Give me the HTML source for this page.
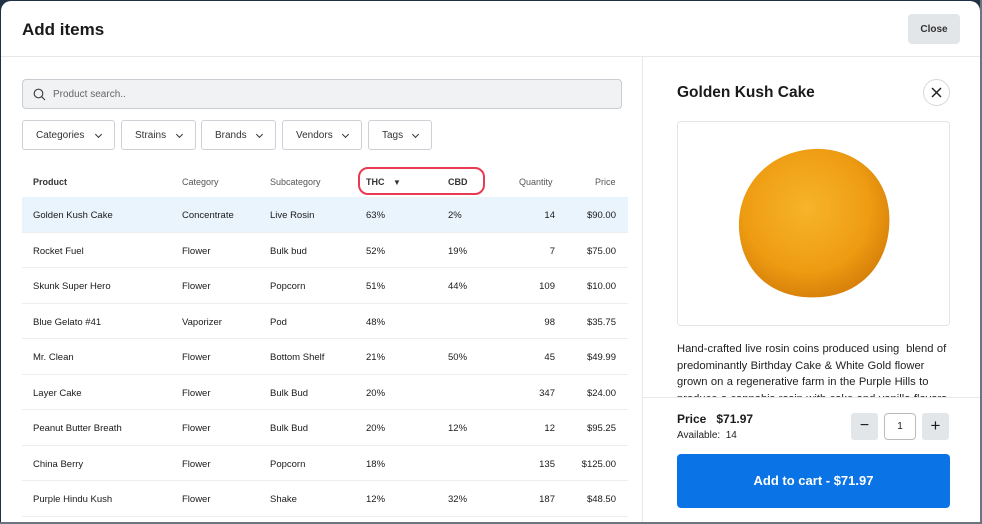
<!DOCTYPE html>
<html><head><style>
*{box-sizing:border-box;margin:0;padding:0}
body{width:982px;height:524px;background:#1f3142;font-family:"Liberation Sans",sans-serif;color:#1a1a1a;overflow:hidden;position:relative}
.modal{position:absolute;left:1px;top:1px;width:979px;height:523px;background:#fff;border-radius:10px 10px 0 0;overflow:hidden}
.hdr{position:absolute;left:0;top:0;width:100%;height:56px;border-bottom:1px solid #e6e8ea}
.hdr h1{position:absolute;left:21px;top:19px;font-size:17px;font-weight:bold}
.close{position:absolute;left:907px;top:13px;width:52px;height:30px;background:#e3e6e9;border-radius:4px;font-size:10px;font-weight:bold;color:#333;display:flex;align-items:center;justify-content:center}
.div{position:absolute;left:641px;top:56px;width:1px;height:470px;background:#e6e8ea}
.search{position:absolute;left:21px;top:78px;width:600px;height:30px;background:#f1f2f4;border:1px solid #c9cdd2;border-radius:4px}
.search span{position:absolute;left:30px;top:9px;font-size:10px;color:#666}
.f{position:absolute;top:119px;height:30px;border:1px solid #cdd1d5;border-radius:3px;font-size:10px;color:#333;display:flex;align-items:center;padding-left:13px}
.f:after{content:"";position:absolute;right:13px;top:11px;width:4px;height:4px;border-right:1.3px solid #333;border-bottom:1.3px solid #333;transform:rotate(45deg)}
.th{position:absolute;top:176px;font-size:9px;color:#555}
.row{position:absolute;left:21px;width:606px;height:35.5px;border-bottom:1px solid #eceef0;font-size:9.5px}
.row.sel{background:#eaf4fd}
.row span{position:absolute;top:13px}
</style></head><body>
<div class="modal">
<div class="hdr"><h1>Add items</h1><div class="close">Close</div></div>
<div class="div"></div>
<div class="search"><svg style="position:absolute;left:10px;top:8px" width="13" height="13" viewBox="0 0 13 13"><circle cx="5.5" cy="5.5" r="4.3" fill="none" stroke="#444" stroke-width="1.2"/><line x1="8.7" y1="8.7" x2="12" y2="12" stroke="#444" stroke-width="1.2"/></svg><span>Product search..</span></div>
<div class="f" style="left:21px;width:93px">Categories</div>
<div class="f" style="left:120px;width:75px">Strains</div>
<div class="f" style="left:200px;width:75px">Brands</div>
<div class="f" style="left:281px;width:80px">Vendors</div>
<div class="f" style="left:367px;width:64px">Tags</div>
<div class="th" style="left:32px;font-weight:bold;color:#333">Product</div>
<div class="th" style="left:181px">Category</div>
<div class="th" style="left:269px">Subcategory</div>
<div class="th" style="left:365px;font-weight:bold;color:#333">THC <span style="font-size:8px;margin-left:6px">▼</span></div>
<div class="th" style="left:447px;font-weight:bold;color:#333">CBD</div>
<div class="th" style="left:518px">Quantity</div>
<div class="th" style="left:594px">Price</div>
<div style="position:absolute;left:357px;top:166px;width:127px;height:28px;border:2.5px solid #e83a52;border-radius:10px"></div>
<div class="row sel" style="top:196px"><span style="left:11px">Golden Kush Cake</span><span style="left:160px">Concentrate</span><span style="left:248px">Live Rosin</span><span style="left:344px">63%</span><span style="left:426px">2%</span><span style="right:73px">14</span><span style="right:12px">$90.00</span></div>
<div class="row" style="top:231.5px"><span style="left:11px">Rocket Fuel</span><span style="left:160px">Flower</span><span style="left:248px">Bulk bud</span><span style="left:344px">52%</span><span style="left:426px">19%</span><span style="right:73px">7</span><span style="right:12px">$75.00</span></div>
<div class="row" style="top:267px"><span style="left:11px">Skunk Super Hero</span><span style="left:160px">Flower</span><span style="left:248px">Popcorn</span><span style="left:344px">51%</span><span style="left:426px">44%</span><span style="right:73px">109</span><span style="right:12px">$10.00</span></div>
<div class="row" style="top:302.5px"><span style="left:11px">Blue Gelato #41</span><span style="left:160px">Vaporizer</span><span style="left:248px">Pod</span><span style="left:344px">48%</span><span style="right:73px">98</span><span style="right:12px">$35.75</span></div>
<div class="row" style="top:338px"><span style="left:11px">Mr. Clean</span><span style="left:160px">Flower</span><span style="left:248px">Bottom Shelf</span><span style="left:344px">21%</span><span style="left:426px">50%</span><span style="right:73px">45</span><span style="right:12px">$49.99</span></div>
<div class="row" style="top:373.5px"><span style="left:11px">Layer Cake</span><span style="left:160px">Flower</span><span style="left:248px">Bulk Bud</span><span style="left:344px">20%</span><span style="right:73px">347</span><span style="right:12px">$24.00</span></div>
<div class="row" style="top:409px"><span style="left:11px">Peanut Butter Breath</span><span style="left:160px">Flower</span><span style="left:248px">Bulk Bud</span><span style="left:344px">20%</span><span style="left:426px">12%</span><span style="right:73px">12</span><span style="right:12px">$95.25</span></div>
<div class="row" style="top:444.5px"><span style="left:11px">China Berry</span><span style="left:160px">Flower</span><span style="left:248px">Popcorn</span><span style="left:344px">18%</span><span style="right:73px">135</span><span style="right:12px">$125.00</span></div>
<div class="row" style="top:480px"><span style="left:11px">Purple Hindu Kush</span><span style="left:160px">Flower</span><span style="left:248px">Shake</span><span style="left:344px">12%</span><span style="left:426px">32%</span><span style="right:73px">187</span><span style="right:12px">$48.50</span></div>

<div style="position:absolute;left:676px;top:83px;font-size:15.5px;font-weight:bold">Golden Kush Cake</div>
<div style="position:absolute;left:922px;top:78px;width:27px;height:27px;border:1px solid #d5d8db;border-radius:50%"><svg width="25" height="25" viewBox="0 0 25 25" style="position:absolute;left:0;top:0"><path d="M8 8L17 17M17 8L8 17" stroke="#222" stroke-width="1.5"/></svg></div>
<div style="position:absolute;left:676px;top:120px;width:273px;height:205px;border:1px solid #e3e5e8;border-radius:4px">
<svg width="273" height="205" viewBox="0 0 273 205" style="position:absolute;left:-1px;top:-1px"><defs><radialGradient id="g" cx="0.45" cy="0.4" r="0.6"><stop offset="0" stop-color="#f7b42a"/><stop offset="0.7" stop-color="#ee9c12"/><stop offset="1" stop-color="#d9820a"/></radialGradient></defs><path d="M137 28C170 26 208 48 212 90C216 135 190 172 145 176C100 180 65 155 62 108C60 62 95 30 137 28Z" fill="url(#g)"/></svg></div>
<div style="position:absolute;left:676px;top:340px;width:275px;font-size:11.2px;line-height:16.5px;color:#222;word-spacing:0.3px">Hand-crafted live rosin coins produced using &nbsp;blend of predominantly Birthday Cake &amp; White Gold flower grown on a regenerative farm in the Purple Hills to produce a cannabis rosin with cake and vanilla flavors</div>
<div style="position:absolute;left:642px;top:396px;width:340px;height:130px;background:#fff;border-top:1px solid #e6e8ea"></div>
<div style="position:absolute;left:676px;top:411px;font-size:12px;font-weight:bold">Price&nbsp;&nbsp;&nbsp;$71.97</div>
<div style="position:absolute;left:676px;top:429px;font-size:10px;color:#222">Available:&nbsp; 14</div>
<div style="position:absolute;left:850px;top:412px;width:27px;height:27px;background:#e3e6e9;border-radius:3px;text-align:center;line-height:25px;font-size:16px">−</div>
<div style="position:absolute;left:883px;top:412px;width:32px;height:27px;border:1px solid #bbb;border-radius:4px;text-align:center;line-height:25px;font-size:10px">1</div>
<div style="position:absolute;left:921px;top:412px;width:27px;height:27px;background:#e3e6e9;border-radius:3px;text-align:center;line-height:25px;font-size:17px">+</div>
<div style="position:absolute;left:676px;top:453px;width:273px;height:54px;background:#0a74e6;border-radius:4px;color:#fff;font-weight:bold;font-size:13px;text-align:center;line-height:54px">Add to cart - $71.97</div>
</div>
<div style="position:absolute;left:980px;top:0;width:2px;height:524px;background:#6b7480"></div>
<div style="position:absolute;left:0;top:522px;width:982px;height:2px;background:#6b7480"></div>
</body></html>
